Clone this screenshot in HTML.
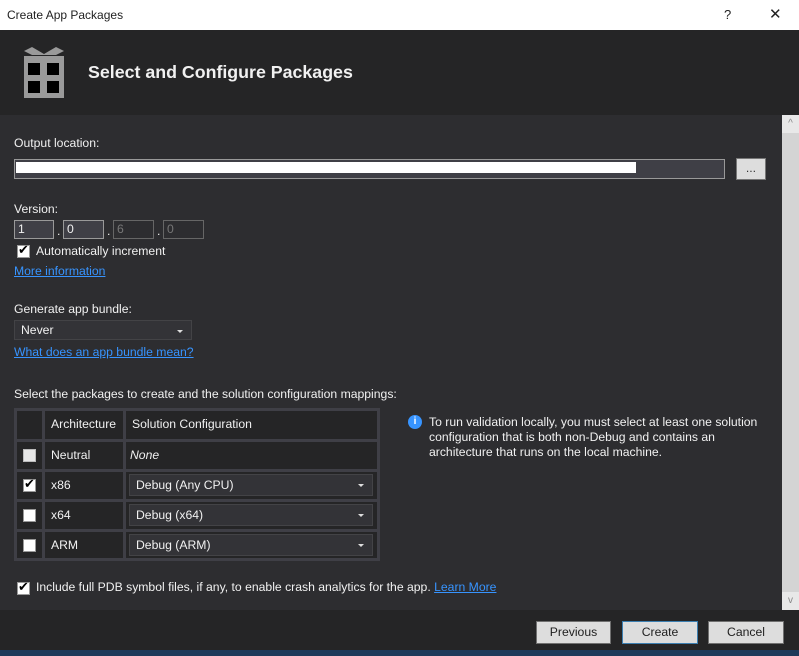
<!DOCTYPE html>
<html><head><style>
*{box-sizing:border-box;margin:0;padding:0}
body{width:799px;height:656px;overflow:hidden;background:#2d2d30;font-family:"Segoe UI","Liberation Sans",sans-serif;font-size:12.2px;color:#f1f1f1;position:relative}
.a{position:absolute}
.cb{position:absolute;width:13px;height:13px;background:#fff;border:1px solid #999}
.box{position:absolute;border:1px solid #999;background:#3f3f46;color:#f1f1f1;height:19px;padding-left:3px;line-height:16px}
.link{color:#3794ff;text-decoration:underline}
.cell{position:absolute;background:#252526}
.dd{position:absolute;background:#333337;border:1px solid #434346;height:22px;line-height:20px;padding-left:6px}
.dd:after{content:"";position:absolute;right:8px;top:9px;border-left:3px solid transparent;border-right:3px solid transparent;border-top:3px solid #ddd}
.btn{position:absolute;top:621px;height:23px;background:#dddddd;border:1px solid #707070;color:#1e1e1e;text-align:center;line-height:21px}
</style></head><body>
<div class="a" style="left:0;top:0;width:799px;height:30px;background:#fff;color:#222;font-size:12px;line-height:30px;padding-left:7px">Create App Packages
<span class="a" style="left:724px;top:0;font-size:13px">?</span>
<span class="a" style="left:769px;top:0;font-size:15px;font-weight:300">✕</span></div>
<div class="a" style="left:0;top:30px;width:799px;height:85px;background:#252526"></div>
<svg class="a" style="left:22px;top:47px" width="44" height="52" viewBox="0 0 44 52">
<path d="M2 4 L10 0 L22 7 L34 0 L42 4 L34 8 L10 8 Z" fill="#9a9a9a"/>
<rect x="2" y="9" width="40" height="42" fill="#9a9a9a"/>
<rect x="6" y="16" width="12" height="12" fill="#000"/><rect x="25" y="16" width="12" height="12" fill="#000"/>
<rect x="6" y="34" width="12" height="12" fill="#000"/><rect x="25" y="34" width="12" height="12" fill="#000"/>
</svg>
<div class="a" style="left:88px;top:62px;font-size:17.8px;font-weight:bold;color:#f1f1f1">Select and Configure Packages</div>
<div class="a" style="left:782px;top:115px;width:17px;height:495px;background:#d4d4d4"></div>
<div class="a" style="left:782px;top:115px;width:17px;height:18px;background:#e8e8e8;color:#888;font-size:10px;text-align:center;line-height:18px">^</div>
<div class="a" style="left:782px;top:592px;width:17px;height:18px;background:#e8e8e8;color:#888;font-size:10px;text-align:center;line-height:18px">v</div>

<div class="a" style="left:14px;top:136px">Output location:</div>
<div class="box" style="left:14px;top:159px;width:711px;height:20px"></div>
<div class="a" style="left:16px;top:162px;width:620px;height:11px;background:#fff"></div>
<div class="a" style="left:736px;top:158px;width:30px;height:22px;background:#ddd;border:1px solid #777;color:#333;text-align:center;line-height:18px">...</div>

<div class="a" style="left:14px;top:202px">Version:</div>
<div class="box" style="left:14px;top:220px;width:40px">1</div><span class="a" style="left:57px;top:224px">.</span>
<div class="box" style="left:63px;top:220px;width:41px">0</div><span class="a" style="left:107px;top:224px">.</span>
<div class="box" style="left:113px;top:220px;width:41px;border-color:#666;color:#777;background:#2d2d30">6</div><span class="a" style="left:157px;top:224px">.</span>
<div class="box" style="left:163px;top:220px;width:41px;border-color:#666;color:#777;background:#2d2d30">0</div>
<div class="cb" style="left:17px;top:245px"></div><div class="a" style="left:18px;top:242px;color:#000;font-size:13px">✔</div>
<div class="a" style="left:36px;top:244px">Automatically increment</div>
<div class="a link" style="left:14px;top:264px">More information</div>

<div class="a" style="left:14px;top:302px">Generate app bundle:</div>
<div class="dd" style="left:14px;top:320px;width:178px;height:20px;line-height:18px;background:#333337">Never</div>
<div class="a link" style="left:14px;top:345px">What does an app bundle mean?</div>

<div class="a" style="left:14px;top:387px">Select the packages to create and the solution configuration mappings:</div>
<div class="a" style="left:14px;top:408px;width:366px;height:153px;background:#3f3f46"></div>
<div class="cell" style="left:17px;top:411px;width:25px;height:28px"></div>
<div class="cell" style="left:45px;top:411px;width:78px;height:28px;padding:6px 0 0 6px">Architecture</div>
<div class="cell" style="left:126px;top:411px;width:251px;height:28px;padding:6px 0 0 6px">Solution Configuration</div>
<div class="cell" style="left:17px;top:442px;width:25px;height:27px"></div>
<div class="cell" style="left:45px;top:442px;width:78px;height:27px;padding:6px 0 0 6px">Neutral</div>
<div class="cell" style="left:126px;top:442px;width:251px;height:27px;padding:6px 0 0 4px;font-style:italic">None</div>
<div class="cb" style="left:23px;top:449px;background:#e6e6e6;border-color:#bbb"></div>
<div class="cell" style="left:17px;top:472px;width:25px;height:27px"></div>
<div class="cell" style="left:45px;top:472px;width:78px;height:27px;padding:6px 0 0 6px">x86</div>
<div class="cell" style="left:126px;top:472px;width:251px;height:27px"></div>
<div class="dd" style="left:129px;top:474px;width:244px">Debug (Any CPU)</div>
<div class="cb" style="left:23px;top:479px"></div><div class="a" style="left:24px;top:476px;color:#000;font-size:13px">✔</div>
<div class="cell" style="left:17px;top:502px;width:25px;height:27px"></div>
<div class="cell" style="left:45px;top:502px;width:78px;height:27px;padding:6px 0 0 6px">x64</div>
<div class="cell" style="left:126px;top:502px;width:251px;height:27px"></div>
<div class="dd" style="left:129px;top:504px;width:244px">Debug (x64)</div>
<div class="cb" style="left:23px;top:509px"></div>
<div class="cell" style="left:17px;top:532px;width:25px;height:26px"></div>
<div class="cell" style="left:45px;top:532px;width:78px;height:26px;padding:6px 0 0 6px">ARM</div>
<div class="cell" style="left:126px;top:532px;width:251px;height:26px"></div>
<div class="dd" style="left:129px;top:534px;width:244px">Debug (ARM)</div>
<div class="cb" style="left:23px;top:539px"></div>

<div class="a" style="left:408px;top:415px;width:14px;height:14px;border-radius:50%;background:#3794ff;color:#fff;font-size:10px;font-weight:bold;text-align:center;line-height:14px">i</div>
<div class="a" style="left:429px;top:415px;width:345px;line-height:15px">To run validation locally, you must select at least one solution configuration that is both non-Debug and contains an architecture that runs on the local machine.</div>

<div class="cb" style="left:17px;top:582px"></div><div class="a" style="left:18px;top:579px;color:#000;font-size:13px">✔</div>
<div class="a" style="left:36px;top:580px">Include full PDB symbol files, if any, to enable crash analytics for the app. <span class="link">Learn More</span></div>

<div class="a" style="left:0;top:610px;width:799px;height:40px;background:#252526"></div>
<div class="btn" style="left:536px;width:75px">Previous</div>
<div class="btn" style="left:622px;width:76px;border-color:#3c7fb1">Create</div>
<div class="btn" style="left:708px;width:76px">Cancel</div>
<div class="a" style="left:0;top:650px;width:799px;height:6px;background:#1e3a5a"></div>
</body></html>
